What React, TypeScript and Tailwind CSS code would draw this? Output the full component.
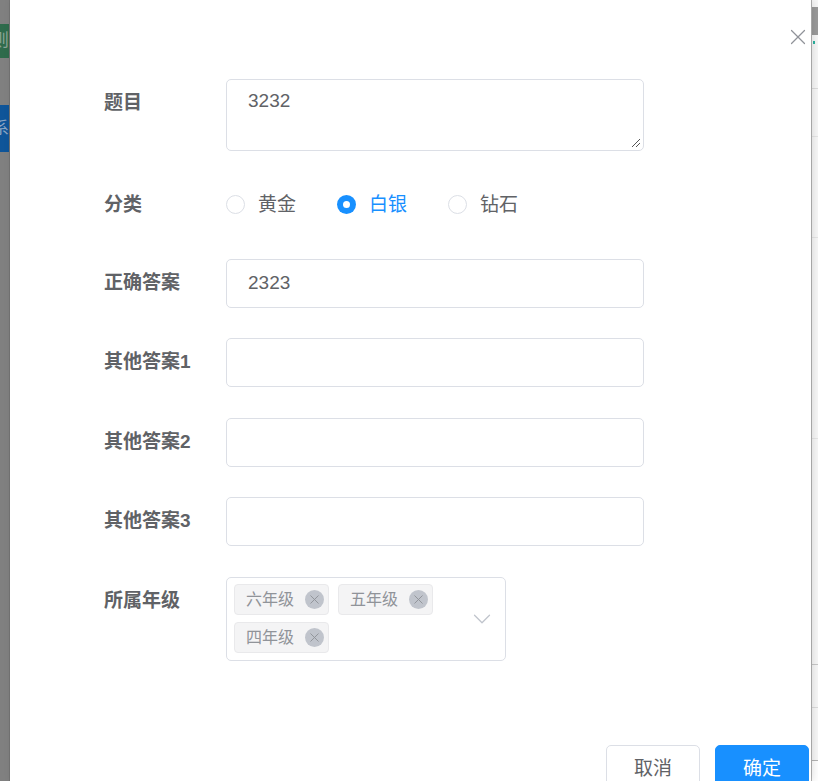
import { ChevronDown, X } from 'lucide-react';

const font = { fontFamily: '"Liberation Sans", "Noto Sans CJK SC", sans-serif' };

function Field({ label, children, h = 'h-[49px]' }: { label: string; children: React.ReactNode; h?: string }) {
  return (
    <div className="flex">
      <div className={`w-[122px] shrink-0 ${h} flex items-center text-[19px] font-bold text-[#606266]`}>{label}</div>
      {children}
    </div>
  );
}

function TextInput({ value = '' }: { value?: string }) {
  return (
    <div className="flex h-[49px] w-[418px] items-center rounded-[5px] border border-[#dcdfe6] bg-white px-[21px] text-[19px] text-[#606266]">
      {value}
    </div>
  );
}

function Radio({ label, checked }: { label: string; checked?: boolean }) {
  return (
    <div className="flex items-center gap-[13px]">
      {checked ? (
        <span className="flex h-[19px] w-[19px] items-center justify-center rounded-full bg-[#1890ff]">
          <span className="h-[7px] w-[7px] rounded-full bg-white" />
        </span>
      ) : (
        <span className="h-[19px] w-[19px] rounded-full border border-[#dcdfe6] bg-white" />
      )}
      <span className={`text-[19px] ${checked ? 'text-[#1890ff]' : 'text-[#606266]'}`}>{label}</span>
    </div>
  );
}

function Tag({ label }: { label: string }) {
  return (
    <span className="flex h-[31px] items-center gap-[11px] rounded-[4px] border border-[#e9e9eb] bg-[#f4f4f5] pl-[11px] pr-[4px] text-[16px] text-[#909399]">
      {label}
      <span className="flex h-[19px] w-[19px] items-center justify-center rounded-full bg-[#c0c4cc]">
        <X className="h-[15px] w-[15px] text-[#909399]" strokeWidth={1.5} />
      </span>
    </span>
  );
}

export default function App() {
  return (
    <div className="flex h-[781px] w-[818px] overflow-hidden bg-[#808080]" style={font}>
      {/* page behind the overlay, left side */}
      <div className="flex w-[10px] shrink-0 flex-col border-r border-[#747474] bg-[#808080]">
        <div className="mt-[24px] flex h-[34px] items-center justify-end overflow-hidden bg-[#2f6b4c] text-[17px] text-[#8aa596]">
          <span className="shrink-0">规则</span>
        </div>
        <div className="mt-[47px] flex h-[47px] items-center justify-end overflow-hidden bg-[#0f5599] text-[17px] text-[#8da6c2]">
          <span className="shrink-0">体系</span>
        </div>
      </div>

      {/* dialog */}
      <div className="relative w-[801px] shrink-0 bg-white shadow-[2px_0_8px_rgba(0,0,0,0.12)]">
        <button type="button" className="absolute right-0 top-[24px] text-[#909399]">
          <X className="h-[26px] w-[26px]" strokeWidth={1.1} />
        </button>

        <div className="flex flex-col gap-[30.5px] pl-[94px] pt-[79px]">
          <Field label="题目">
            <div className="relative h-[72px] w-[418px] rounded-[5px] border border-[#dcdfe6] px-[21px] pt-[8px] text-[19px] leading-[26px] text-[#606266]">
              3232
              <svg className="absolute bottom-[2px] right-[2px]" width="11" height="11" viewBox="0 0 11 11">
                <path d="M10 2 L2 10 M10 6 L6 10" stroke="#555" strokeWidth="1" />
              </svg>
            </div>
          </Field>

          <Field label="分类" h="h-[46.5px]">
            <div className="flex h-[46.5px] items-center gap-[41px]">
              <Radio label="黄金" />
              <Radio label="白银" checked />
              <Radio label="钻石" />
            </div>
          </Field>

          <Field label="正确答案">
            <TextInput value="2323" />
          </Field>
          <Field label="其他答案1">
            <TextInput />
          </Field>
          <Field label="其他答案2">
            <TextInput />
          </Field>
          <Field label="其他答案3">
            <TextInput />
          </Field>

          <Field label="所属年级">
            <div className="flex h-[84px] w-[280px] items-center rounded-[5px] border border-[#dcdfe6] pl-[7px] pr-[8px]">
              <div className="flex w-[230px] flex-wrap gap-x-[9px] gap-y-[7px]">
                <Tag label="六年级" />
                <Tag label="五年级" />
                <Tag label="四年级" />
              </div>
              <ChevronDown className="ml-auto h-[30px] w-[30px] text-[#c0c4cc]" strokeWidth={1} />
            </div>
          </Field>
        </div>

        <div className="mt-[84px] flex justify-end gap-[15px] pr-[2px]">
          <button type="button" className="h-[49px] w-[94px] rounded-[5px] border border-[#dcdfe6] bg-white text-[19px] text-[#606266]">
            取消
          </button>
          <button type="button" className="h-[49px] w-[94px] rounded-[5px] border border-[#1890ff] bg-[#1890ff] text-[19px] text-white">
            确定
          </button>
        </div>
      </div>

      {/* page behind, right side */}
      <div className="flex w-[7px] shrink-0 flex-col border-l border-[#b4b4b4] bg-[#f7f7f7]">
        <div className="mt-[7px] h-[28px] bg-[#9a9a9a]" />
        <div className="ml-[1px] mt-[6px] h-[3px] w-[2px] bg-[#2bb3a0]" />
        <div className="mt-[44px] h-[1px] bg-[#dcdcdc]" />
        <div className="mt-[47px] h-[1px] bg-[#e6e6e6]" />
        <div className="mt-[100px] h-[1px] bg-[#e6e6e6]" />
        <div className="mt-[200px] h-[1px] bg-[#e6e6e6]" />
        <div className="mt-[225px] h-[1px] bg-[#c8c8c8]" />
        <div className="mt-[42px] h-[1px] bg-[#dcdcdc]" />
        <div className="mt-[52px] h-[1px] bg-[#b4b4b4]" />
        <div className="flex-1 bg-white" />
      </div>
    </div>
  );
}
